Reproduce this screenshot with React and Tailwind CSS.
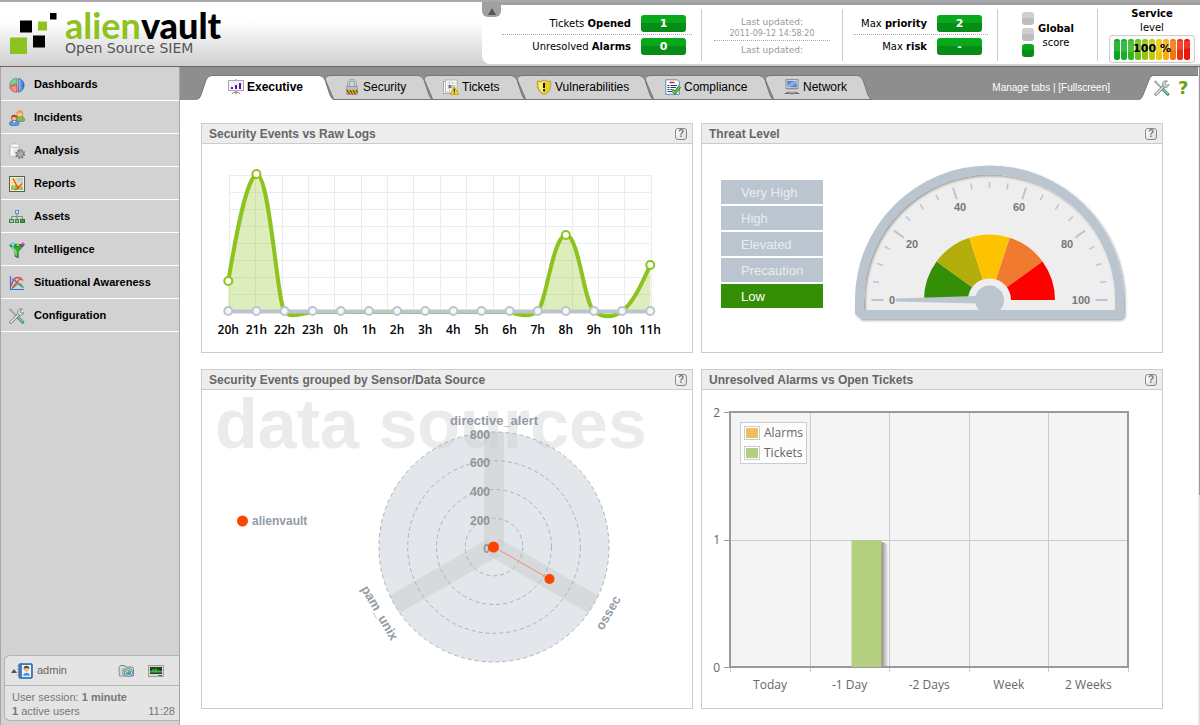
import React from 'react';

/* ---------- icons (16 x 16) ---------- */
function Icon({ children, size = 'size-4' }) {
  return (
    <svg viewBox="0 0 16 16" className={`${size} shrink-0`} aria-hidden="true">
      {children}
    </svg>
  );
}

const PieIcon = () => (
  <Icon>
    <defs>
      <linearGradient id="pieBlue" x1="0" y1="0" x2="1" y2="0">
        <stop offset="0" stopColor="#9cc8f3" />
        <stop offset="1" stopColor="#2a62c4" />
      </linearGradient>
    </defs>
    <path d="M9.200 1.400C17 2.500 17 13.500 9.600 15.200Z" fill="url(#pieBlue)" stroke="#2f5fae" strokeWidth=".7" />
    <path d="M7.500 1.200C3 1.600 .6 5 .7 8.600L7.500 6.500Z" fill="#7fcf94" stroke="#3c9c5c" strokeWidth=".7" />
    <path d="M.8 9.600 7.800 7.300 8.200 15.200C4 15.200 1.200 13 .8 9.600Z" fill="#f07a74" stroke="#c93a3a" strokeWidth=".7" />
    <path d="M4 9.500l1 5M6 9l.6 5.500" stroke="#fbc0bb" strokeWidth=".6" />
  </Icon>
);

const UsersIcon = () => (
  <Icon>
    <path d="M6 10c0-3 2-4 5-4s4.500 1.500 4.500 4.200c0 1-1 1.300-4.500 1.300S6 11 6 10Z" fill="#7dbb5a" stroke="#4b8c33" strokeWidth=".7" />
    <circle cx="10.800" cy="3.900" r="3.100" fill="#f3c592" stroke="#b9792c" strokeWidth=".6" />
    <path d="M7.500 3.800C7.600 1.300 9 .4 10.800.4s3.300 1 3.300 3.400C12.500 2.600 10 2.400 7.500 3.800Z" fill="#e3a33a" />
    <path d="M.5 14c0-2.600 2-3.500 4.800-3.500S10 11.400 10 14c0 1.200-1.200 1.600-4.700 1.600S.5 15.200.5 14Z" fill="#5b9ae6" stroke="#2d67b8" strokeWidth=".7" />
    <circle cx="5.200" cy="8" r="2.900" fill="#f0b98a" stroke="#8a4a22" strokeWidth=".6" />
    <path d="M2.200 7.900C2.300 5.600 3.500 4.700 5.200 4.700s3 1 3 3.200C6.500 6.700 4.500 6.500 2.200 7.900Z" fill="#9a5428" />
    <path d="M4 11l1.300 1.800L6.600 11Z" fill="#fff" />
  </Icon>
);

const AnalysisIcon = () => (
  <Icon>
    <path d="M1 3v8.500C1 13 3 13.800 5.800 13.800S10.500 13 10.500 11.500V3Z" fill="#e9e9e9" stroke="#a5a5a5" strokeWidth=".7" />
    <path d="M2.200 4.500v8M3.600 5v8.300" stroke="#fff" />
    <ellipse cx="5.800" cy="2.700" rx="4.700" ry="1.900" fill="#fafafa" stroke="#b0b0b0" strokeWidth=".7" />
    <circle cx="11.200" cy="11" r="4.200" fill="none" stroke="#777" strokeWidth="1.500" strokeDasharray="1.800 1.500" />
    <circle cx="11.200" cy="11" r="3.300" fill="#bdbdbd" stroke="#6f6f6f" strokeWidth=".9" />
    <circle cx="11.200" cy="11" r="1.300" fill="#eee" stroke="#6f6f6f" strokeWidth=".8" />
  </Icon>
);

const ReportsIcon = () => (
  <Icon>
    <rect x=".5" y=".5" width="15" height="15" fill="#f7f3d0" stroke="#56604f" />
    <rect x="2" y="2" width="12" height="12" fill="#f4dc7b" />
    <path d="M8 2h6v6L8 5Z" fill="#a7c8ea" />
    <path d="M2 10l5-1 7 2v3H2Z" fill="#8fbf68" />
    <path d="M2 5h12M2 8h12M5 2v12M11 2v12" stroke="#fff" strokeOpacity=".5" strokeWidth=".6" />
    <path d="M4 2.500 9 12l4-4.500M9 12l-3.500 2" stroke="#e0552e" strokeWidth="1.300" fill="none" />
  </Icon>
);

const AssetsIcon = () => (
  <Icon>
    <path d="M8 5v2.500M2.500 10V7.500h11V10M8 7v3" stroke="#8a8a8a" fill="none" />
    <rect x="6.500" y="1.500" width="3" height="3" fill="#cfe2fa" stroke="#5b8fd8" />
    <rect x=".5" y="10.500" width="4" height="3" fill="#98cf98" stroke="#3e8a3e" />
    <rect x="6.500" y="10.500" width="3" height="3" fill="#7cc07c" stroke="#3e8a3e" />
    <rect x="11.500" y="10.500" width="4" height="3" fill="#4c9c50" stroke="#2e7333" />
  </Icon>
);

const FunnelIcon = () => (
  <Icon>
    <path d="M.7 3.200 6 9.500v4.700l3.200 1.600V9.500L15 3.200Z" fill="#2fae2f" stroke="#166b1b" strokeWidth=".8" />
    <path d="M3 5l4 4.500v4" stroke="#a6ef8e" strokeWidth="1.200" fill="none" />
    <ellipse cx="7.800" cy="3.200" rx="6.800" ry="1.500" fill="#1c6e2c" />
    <circle cx="4" cy="2.600" r="1.900" fill="#7fdcf4" stroke="#3aa3c8" strokeWidth=".5" />
    <path d="M6.500 3.800 9 1.800l2 2Z" fill="#f6e03d" />
    <path d="M13.800.3v4M11.800 2.300h4" stroke="#d426d4" strokeWidth="1.300" />
  </Icon>
);

const SituationIcon = () => (
  <Icon>
    <path d="M1.500 1v13.500H15" fill="none" stroke="#3a6fc2" strokeWidth="1.200" />
    <path d="M2 11C5 1.500 9 .5 14 5.500" fill="none" stroke="#e2474b" strokeWidth="1.600" />
    <path d="M3 4c3 0 5 5 11 8" fill="none" stroke="#4d86e0" strokeWidth="1.600" />
    <path d="M3 13.500C6 12 8 7.500 10.500 8.500S13 12 14.500 13" fill="none" stroke="#5dae5d" strokeWidth="1.500" />
    <path d="M3.500 12.500 12 2.500" stroke="#e2474b" strokeWidth="1.200" />
  </Icon>
);

const ToolsIcon = () => (
  <Icon>
    <path d="M1.300 1.600 8.300 8.600" stroke="#7b8780" strokeWidth="1.900" strokeLinecap="round" />
    <path d="M1.300 1.600 8 8.300" stroke="#dfe5e1" strokeWidth=".8" />
    <path d="M8.500 8.800 13.800 14.200" stroke="#3b8f6a" strokeWidth="3" strokeLinecap="round" />
    <path d="M8.800 8.900 13.600 13.700" stroke="#9fd8bd" strokeWidth="1.100" strokeLinecap="round" />
    <path d="M1.900 14.200 10.500 5.600" stroke="#6f7672" strokeWidth="3" strokeLinecap="round" />
    <path d="M2 14.100 10.800 5.300" stroke="#e3e8e5" strokeWidth="1.500" strokeLinecap="round" />
    <path d="M13.500 1.300A3.300 3.300 0 1 0 15 4.600L12.800 5.300 11 3.700 11.600 1.800Z" fill="#d5dad7" stroke="#7a827d" strokeWidth=".8" />
  </Icon>
);

const BoardIcon = () => (
  <Icon>
    <path d="M8 0v1.500M8 12v3.500M4 14.600l2-1.300h4l2 1.300" stroke="#7d7d7d" fill="none" />
    <rect x=".5" y="1.500" width="15" height="10" fill="#f4f4f4" stroke="#a9a9a9" />
    <path d="M3 8h2v2H3ZM7 6h2v4H7ZM11 4h2v6h-2Z" fill="#5a12b8" />
  </Icon>
);

const LockIcon = () => (
  <Icon>
    <path d="M4.500 9V4.500a3.500 3.500 0 0 1 7 0V9" fill="none" stroke="#7d9096" strokeWidth="2.400" />
    <path d="M4.500 9V4.500a3.500 3.500 0 0 1 7 0V9" fill="none" stroke="#c6d6da" strokeWidth="1.200" />
    <rect x="2.500" y="7.500" width="11" height="8" rx=".6" fill="#b3c0c4" stroke="#7c888d" strokeWidth=".7" />
    <rect x="2.500" y="11" width="11" height="4" fill="#f2b428" />
    <path d="M3 11l2.500 4M6 11l2.500 4M9 11l2.500 4M12 11l1.500 2.500" stroke="#5b4411" strokeWidth="1.200" />
  </Icon>
);

const TicketIcon = () => (
  <Icon>
    <rect x=".5" y="2.500" width="11" height="12" fill="#fff" stroke="#9a9a9a" strokeWidth=".8" />
    <rect x="2.500" y="1" width="11.500" height="12" fill="#fff" stroke="#a8a8a8" strokeWidth=".8" />
    <path d="M4 4h9M4 6.500h9M4 9h6M6.500 2v10M9.500 2v7" stroke="#c4c4c4" strokeWidth=".8" />
    <path d="M5.500 6h3v3h-3Z" fill="#6d7a86" />
    <path d="M11.300 7.300 15.700 15.300H7Z" fill="#f7da2c" stroke="#b89410" strokeWidth=".8" strokeLinejoin="round" />
    <path d="M11.300 9.800v3M11.300 13.500v1" stroke="#222" strokeWidth="1.200" />
  </Icon>
);

const ShieldIcon = () => (
  <Icon>
    <path d="M8 .8C6 2.300 4 2.600 1.500 2c-1 6 .5 11 6.500 13.500C14 13 15.500 8 14.500 2 12 2.600 10 2.300 8 .8Z" fill="#e7cf2a" stroke="#ae9c3a" strokeWidth=".9" />
    <path d="M8 2.400C6.400 3.400 4.600 3.800 2.700 3.500c-.3 4.500.9 8.200 5.300 10.300Z" fill="#f8ee78" />
    <path d="M8 4v5M8 10.300v2" stroke="#111" strokeWidth="2" />
  </Icon>
);

const ComplianceIcon = () => (
  <Icon>
    <path d="M.8.8h11.500l2 2v12.500H.8Z" fill="#fff" stroke="#4f7fc0" strokeWidth=".9" />
    <path d="M4.500 3.500h5" stroke="#d22" strokeWidth="1.500" />
    <path d="M2.500 6.500h2M5.500 6.500H12M2.500 8.500h2M5.500 8.500H11M2.500 10.500h2M5.500 10.500h2M2.500 12.500h5" stroke="#1f3a78" strokeWidth="1" />
    <path d="M7.300 11.200 10 13.800 14.800 7.500" fill="none" stroke="#2b7d24" strokeWidth="3.200" />
    <path d="M7.300 11.200 10 13.800 14.800 7.500" fill="none" stroke="#5fc34c" strokeWidth="1.900" />
  </Icon>
);

const NetworkIcon = () => (
  <Icon>
    <defs>
      <linearGradient id="screenBlue" x1="0" y1="0" x2="1" y2="1">
        <stop offset="0" stopColor="#2d64b4" />
        <stop offset=".5" stopColor="#8db5e6" />
        <stop offset="1" stopColor="#2d64b4" />
      </linearGradient>
    </defs>
    <rect x="2" y=".7" width="12" height="9" fill="#d8d8d8" stroke="#6f7884" strokeWidth=".8" />
    <rect x="3.300" y="2" width="9.400" height="6.300" fill="url(#screenBlue)" />
    <path d="M5 10.500h6v2H5Z" fill="#e9e9e9" stroke="#8a8a8a" strokeWidth=".6" />
    <path d="M.5 14.500h15M2 13.500h3M11 13.500h3M7 13v2.500M9 13v2.500" stroke="#777" />
  </Icon>
);

const AddressIcon = () => (
  <Icon>
    <rect x="2" y=".7" width="13.300" height="14.600" rx="1" fill="#3b82cf" stroke="#1f5ba6" strokeWidth=".8" />
    <rect x="5" y="2" width="9" height="12" fill="#eef5fc" />
    <path d="M.5 3h3M.5 6h3M.5 9h3M.5 12h3" stroke="#5c6b7d" strokeWidth="1.200" />
    <circle cx="9.500" cy="6" r="2.700" fill="#f1bd8c" />
    <path d="M6.600 6C6.300 1.800 12.700 1.800 12.400 6 11 4.600 8.500 4.600 6.600 6Z" fill="#7c3f14" />
    <path d="M6 12.700c.3-4 6.700-4 7 0Z" fill="#4e93df" />
  </Icon>
);

const CameraIcon = () => (
  <Icon>
    <path d="M1 4.500 2.500 2.500h4L8 4h6.500l1 1.500v7.500H1.500Z" fill="#cfd6da" stroke="#75797c" strokeWidth=".9" />
    <path d="M1.500 5.500H8v7H1.500Z" fill="#a9b1b6" />
    <path d="M3 4v8.500" stroke="#eef1f2" strokeWidth="1.200" />
    <circle cx="10.500" cy="9.500" r="4" fill="#dde3e6" stroke="#5f666b" strokeWidth=".8" />
    <circle cx="10.500" cy="9.500" r="2.500" fill="#2f9cb4" />
    <circle cx="9.700" cy="8.700" r=".9" fill="#b9eef6" />
  </Icon>
);

const MonitorIcon = () => (
  <Icon>
    <rect x=".5" y="2.500" width="15" height="11" fill="#d5d5d5" stroke="#8f8f8f" strokeWidth=".8" />
    <rect x="2" y="4" width="12" height="7" fill="#274128" />
    <path d="M2 9.500V8h2l1-2.500 1.500 2L8 5l1.500 3 1.500-1 1 1h2v1.500Z" fill="#3fb83a" />
    <path d="M10.500 12.500h3.500" stroke="#555" />
  </Icon>
);

/* ---------- header ---------- */
function Logo() {
  return (
    <a href="#home" aria-label="alienvault Open Source SIEM" className="flex items-start gap-2 pt-[11px] pl-[10px]">
      <svg viewBox="10 13 47 41" className="w-[47px]" aria-hidden="true">
        <path d="M50 13h6.500v6.500H50ZM20 20.500h12V32.500H20ZM33 35.500h12V47.500H33Z" fill="#000" />
        <path d="M38 21.500h9V30.500h-9ZM10 37.500h17V54H10Z" fill="#8dc21f" />
      </svg>
      <span className="flex flex-col gap-[3px]">
        <span className="font-['Lato',sans-serif] text-[36px] leading-6 text-black">
          <span className="font-bold text-[#8dc21f]">alien</span>
          <span className="font-black">vault</span>
        </span>
        <span className="font-['DejaVu_Sans',sans-serif] text-[14px] leading-4 text-[#555]">Open Source SIEM</span>
      </span>
    </a>
  );
}

function Pill({ children }) {
  return (
    <span className="flex h-[17px] w-[45px] items-center justify-center rounded-[3px] bg-[linear-gradient(#07a91b_50%,#078d17_50%)] text-[11px] font-bold text-white">
      {children}
    </span>
  );
}

function StatPair({ rows, className }) {
  return (
    <dl className={`flex flex-col pt-[10px] ${className}`}>
      {rows.map(([word, strong, value], i) => (
        <div
          key={strong}
          className={`flex items-center justify-end gap-[10px] ${
            i === 0 ? 'border-b border-dotted border-[#aaa] pb-[2px]' : 'pt-[3px]'
          } pr-[6px]`}
        >
          <dt>
            {word} <b>{strong}</b>
          </dt>
          <dd>
            <Pill>{value}</Pill>
          </dd>
        </div>
      ))}
    </dl>
  );
}

const Divider = () => <span className="mt-1 h-[52px] w-px shrink-0 bg-[#ccc]" />;

const SERVICE_COLOURS = ['#08a520', '#12b02a', '#2fb81c', '#6cbf12', '#93c40c', '#bfc90a', '#e8c808', '#f6ac0a', '#f3720c', '#f02a10', '#ec1408'];

function StatusBar() {
  return (
    <section
      aria-label="Status"
      className="flex h-[62px] w-[718px] rounded-bl-lg border-t-[3px] border-[#a0a0a0] bg-white font-['DejaVu_Sans',sans-serif] text-[10px] leading-[13px] text-black"
    >
      <button type="button" aria-label="Collapse" className="flex h-3 w-[19px] items-center justify-center rounded-b-md bg-[#a0a0a0]">
        <svg viewBox="0 0 8 7" className="w-2" aria-hidden="true">
          <path d="M4 0 8 7H0Z" fill="#555" />
        </svg>
      </button>
      <StatPair
        className="mr-[9px] ml-px w-[190px]"
        rows={[
          ['Tickets', 'Opened', '1'],
          ['Unresolved', 'Alarms', '0'],
        ]}
      />
      <Divider />
      <div className="mx-3 flex w-[116px] flex-col pt-[11px] text-center text-[9px] leading-3 text-[#999]">
        <span>Last updated:</span>
        <span className="border-b border-dotted border-[#aaa] pb-px text-[8px] leading-[11px]">2011-09-12 14:58:20</span>
        <span className="pt-[3px]">Last updated:</span>
      </div>
      <Divider />
      <StatPair
        className="mr-[9px] ml-[10px] w-[135px]"
        rows={[
          ['Max', 'priority', '2'],
          ['Max', 'risk', '-'],
        ]}
      />
      <Divider />
      <div className="flex w-[99px] items-start gap-1 pt-[7px] pl-6">
        <div className="flex flex-col gap-[3px]">
          <span className="h-[13px] w-3 rounded-[3px] bg-[linear-gradient(#cfcfcf_50%,#bdbdbd_50%)]" />
          <span className="h-[13px] w-3 rounded-[3px] bg-[linear-gradient(#cfcfcf_50%,#bdbdbd_50%)]" />
          <span className="h-[13px] w-3 rounded-[3px] bg-[linear-gradient(#07a91b_50%,#078d17_50%)]" />
        </div>
        <div className="flex flex-col pt-[10px] text-center leading-[14px]">
          <b>Global</b>
          <span>score</span>
        </div>
      </div>
      <Divider />
      <div className="flex flex-1 flex-col items-center pt-[2px] pl-[6px] leading-[14px]">
        <b>Service</b>
        <span>level</span>
        <div className="grid h-[28px] w-[86px] place-items-center rounded-[3px] border border-[#ccc] bg-[#fafafa]">
          <svg viewBox="0 0 76 21" className="col-start-1 row-start-1 w-[76px]" aria-hidden="true">
            {SERVICE_COLOURS.map((c, i) => (
              <rect key={c} x={i * 7} y="0" width="6" height="21" rx="2.500" fill={c} />
            ))}
            <path d="M0 2H76V9Q40 16 0 12Z" fill="#fff" opacity=".15" />
          </svg>
          <b className="z-10 col-start-1 row-start-1 text-[11px]">100 %</b>
        </div>
      </div>
    </section>
  );
}

/* ---------- sidebar ---------- */
const MENU = [
  ['Dashboards', PieIcon],
  ['Incidents', UsersIcon],
  ['Analysis', AnalysisIcon],
  ['Reports', ReportsIcon],
  ['Assets', AssetsIcon],
  ['Intelligence', FunnelIcon],
  ['Situational Awareness', SituationIcon],
  ['Configuration', ToolsIcon],
];

function Sidebar() {
  return (
    <aside className="flex w-[180px] shrink-0 flex-col border-x border-[#a6a6a6] bg-[#d2d2d2]">
      <nav aria-label="Main" className="pt-px">
        <ul>
          {MENU.map(([label, Glyph]) => (
            <li key={label}>
              <a href="#section" className="flex h-[33px] items-center gap-[9px] border-b border-white pt-px pl-2 text-[11px] font-bold text-black">
                <Glyph />
                {label}
              </a>
            </li>
          ))}
        </ul>
      </nav>
      <div className="mt-auto mb-1 ml-[3px] rounded-l-md border border-r-0 border-[#b5b5b5] bg-[#e4e4e4] text-[11px] text-[#777]">
        <div className="flex h-[30px] items-center border-b border-[#b5b5b5] pl-[6px]">
          <svg viewBox="0 0 6 4" className="w-[6px]" aria-hidden="true">
            <path d="M3 0 6 4H0Z" fill="#555" />
          </svg>
          <button type="button" className="flex flex-1 items-center gap-1 text-[#666]">
            <AddressIcon />
            admin
          </button>
          <button type="button" aria-label="Snapshot">
            <CameraIcon />
          </button>
          <button type="button" aria-label="System monitor" className="mr-[15px] ml-[14px]">
            <MonitorIcon />
          </button>
        </div>
        <div className="px-[7px] pt-1 pr-1 pb-[2px] leading-[14px]">
          <p>
            User session: <b>1 minute</b>
          </p>
          <p className="flex justify-between">
            <span>
              <b>1</b> active users
            </span>
            <span>11:28</span>
          </p>
        </div>
      </div>
    </aside>
  );
}

/* ---------- tabs ---------- */
const TABS = [
  { label: 'Executive', Glyph: BoardIcon, w: 127, cls: 'z-60 w-[127px] pl-[30px] font-bold' },
  { label: 'Security', Glyph: LockIcon, w: 99, cls: 'z-50 w-[99px] pl-[19px]' },
  { label: 'Tickets', Glyph: TicketIcon, w: 93, cls: 'z-40 w-[93px] pl-[19px]' },
  { label: 'Vulnerabilities', Glyph: ShieldIcon, w: 128, cls: 'z-30 w-[128px] pl-[19px]' },
  { label: 'Compliance', Glyph: ComplianceIcon, w: 120, cls: 'z-20 w-[120px] pl-[20px]' },
  { label: 'Network', Glyph: NetworkIcon, w: 98, cls: 'z-10 w-[98px] pl-[19px]' },
];

function tabPath(w, first) {
  const left = first ? 'M-2 25Q2 24 3 20L8 5Q10 .5 14 .5' : 'M9 25L0 4Q1 .5 5 .5';
  return `${left}H${w - 6}Q${w - 2} .5 ${w} 5L${w + 5} 20Q${w + 7} 24.500 ${w + 9} 25`;
}

function Tab({ tab, active }) {
  const { label, Glyph, w, cls } = tab;
  return (
    <button type="button" role="tab" aria-selected={active} className={`relative flex h-[25px] shrink-0 items-center pb-[2px] text-xs text-black ${cls}`}>
      <svg viewBox={`0 0 ${w} 25`} className="absolute inset-0 size-full overflow-visible" aria-hidden="true">
        <path d={tabPath(w, active)} fill={active ? '#fff' : '#d2d2d2'} stroke="#777" />
        {!active && <path d={`M9 24.500H${w + 8}`} stroke="#777" />}
        {active && <path d={`M-2 25.500H${w + 9}`} stroke="#fff" strokeWidth="1.500" />}
      </svg>
      <span className="relative flex items-center gap-[3px]">
        <Glyph />
        {label}
      </span>
    </button>
  );
}

function TabBar() {
  return (
    <div className="flex h-[33px] items-end bg-[#8e8e8e] pl-[18px]">
      <div role="tablist" className="flex flex-1">
        {TABS.map((tab, i) => (
          <Tab key={tab.label} tab={tab} active={i === 0} />
        ))}
      </div>
      <p className="pb-1 text-[10px] leading-4 text-white">
        <a href="#tabs">Manage tabs</a> | <a href="#full">[Fullscreen]</a>
      </p>
      <div className="relative ml-7 flex h-[25px] w-[60px] items-center gap-2 pl-4">
        <svg viewBox="0 0 60 25" className="absolute inset-0 size-full" aria-hidden="true">
          <path d="M0 25Q4 24 5 20L11 5Q12 .5 16 .5H60V25Z" fill="#fff" />
          <path d="M0 25Q4 24 5 20L11 5Q12 .5 16 .5H60" fill="none" stroke="#777" />
        </svg>
        <button type="button" aria-label="Tools" className="relative">
          <ToolsIcon />
        </button>
        <button type="button" aria-label="Help" className="relative font-['DejaVu_Sans',sans-serif] text-lg leading-5 font-bold text-[#6ba00f]">
          ?
        </button>
      </div>
    </div>
  );
}

/* ---------- panels ---------- */
function Panel({ title, children }) {
  return (
    <section className="flex flex-col border border-[#ccc] bg-white">
      <header className="flex h-5 items-center justify-between border-b border-[#ccc] bg-[#ededed] pr-[5px] pl-[7px]">
        <h2 className="text-xs font-bold text-[#666]">{title}</h2>
        <button
          type="button"
          aria-label="Help"
          className="flex size-3 items-center justify-center rounded-[3px] border border-[#888] bg-[linear-gradient(135deg,#fff,#ddd)] text-[10px] leading-[10px] font-bold text-[#777]"
        >
          ?
        </button>
      </header>
      {children}
    </section>
  );
}

const HOURS = ['20h', '21h', '22h', '23h', '0h', '1h', '2h', '3h', '4h', '5h', '6h', '7h', '8h', '9h', '10h', '11h'];
const hourX = (i) => 228.300 + i * 28.130;
const CURVE =
  'M228.300 281C236 235 246 180 256.400 174C270 174 277 304 284.600 311C290 318 297 315 312.700 312H509C520 315 530 318 537.700 311C546 304 553 235 566 235C579 235 584 304 594 311C602 318 614 318 622 311C632 304 640 288 650.300 265';

function EventsChart() {
  return (
    <svg viewBox="202 144 490 208" className="w-full" role="img" aria-label="Security events per hour">
      <g stroke="#ececec">
        {Array.from({ length: 9 }, (_, i) => (
          <path key={i} d={`M229 ${175.500 + i * 17}H651`} />
        ))}
        {Array.from({ length: 17 }, (_, i) => (
          <path key={i} d={`M${229.500 + Math.round(i * 26.350)} 175V311`} />
        ))}
      </g>
      <path d={`${CURVE}V311H228.300Z`} fill="#8dc21f" fillOpacity=".3" />
      <path d={CURVE} fill="none" stroke="#8dc21f" strokeWidth="4" strokeLinejoin="round" />
      <path d="M228 311.500H650" stroke="#bac5cf" strokeWidth="4" />
      {HOURS.map((h, i) => (
        <g key={h}>
          <circle cx={hourX(i)} cy="311" r="4" fill="#f6f6f6" stroke="#bac5cf" strokeWidth="2" />
          <text x={hourX(i)} y="334" textAnchor="middle" className="fill-black font-['Open_Sans',sans-serif] text-[12px] font-semibold">
            {h}
          </text>
        </g>
      ))}
      {[[0, 281], [1, 174], [12, 235], [15, 265]].map(([i, y]) => (
        <circle key={i} cx={hourX(i)} cy={y} r="4" fill="#fff" stroke="#8dc21f" strokeWidth="2" />
      ))}
    </svg>
  );
}

const LEVELS = ['Very High', 'High', 'Elevated', 'Precaution', 'Low'];
const BANDS = ['#348f06', '#b3ad0b', '#fdc300', '#f07a30', '#ff0000'];
const GX = 989.500;
const GY = 300;
function polar(r, deg) {
  const a = (deg * Math.PI) / 180;
  return `${(GX - r * Math.cos(a)).toFixed(2)} ${(GY - r * Math.sin(a)).toFixed(2)}`;
}

function Gauge() {
  return (
    <svg viewBox="844 156 294 176" className="w-[294px]" role="img" aria-label="Threat level 0 of 100">
      <defs>
        <filter id="drop" x="-10%" y="-10%" width="120%" height="120%">
          <feDropShadow dx="1.500" dy="1.500" stdDeviation="1.200" floodColor="#000" floodOpacity=".35" />
        </filter>
      </defs>
      <path d="M864 300A125.500 125.500 0 0 1 1115 300V310H864Z" fill="#eee" />
      <path
        filter="url(#drop)"
        fillRule="evenodd"
        d="M855 300A134.500 134.500 0 0 1 1124 300V313Q1124 319 1118 319H861L855 314ZM864 300V310H1115V300A125.500 125.500 0 0 0 864 300Z"
        fill="#bac5cf"
      />
      {BANDS.map((c, i) => (
        <path key={c} d={`M${polar(65.500, i * 36)}A65.500 65.500 0 0 1 ${polar(65.500, i * 36 + 36)}L${polar(21.500, i * 36 + 36)}A21.500 21.500 0 0 0 ${polar(21.500, i * 36)}Z`} fill={c} />
      ))}
      {Array.from({ length: 21 }, (_, i) => (
        <path
          key={i}
          d={`M${polar(118, i * 9)}L${polar(i % 4 === 0 ? 106 : 112, i * 9)}`}
          stroke="#bac5cf"
          strokeWidth={i % 4 === 0 ? 2 : 1.500}
        />
      ))}
      <path d="M896 298.500 976 296V303.500L896 301.500Z" fill="#bac5cf" />
      <circle cx={GX} cy={GY} r="14.500" fill="#bac5cf" />
      {[[0, 892, 304], [20, 912, 248], [40, 960, 211], [60, 1019, 211], [80, 1067, 248], [100, 1081, 304]].map(([n, x, y]) => (
        <text key={n} x={x} y={y} textAnchor="middle" className="fill-[#777] text-[11px] font-bold">
          {n}
        </text>
      ))}
    </svg>
  );
}

function ThreatLevel() {
  return (
    <div className="flex items-start pl-[19px]">
      <ul className="flex w-[102px] flex-col gap-[2px] pt-9 text-[13px] leading-[23px]">
        {LEVELS.map((l) => (
          <li key={l} className={`pt-px pl-5 ${l === 'Low' ? 'bg-[#348f06] text-white' : 'bg-[#bac5cf] text-[#e9edf1]'}`}>
            {l}
          </li>
        ))}
      </ul>
      <div className="ml-[21px] pt-3">
        <Gauge />
      </div>
    </div>
  );
}

function SourcesChart() {
  return (
    <svg viewBox="202 390 490 318" className="w-full overflow-visible" role="img" aria-label="Events by data source">
      <text x="215" y="448" className="fill-[#ebebeb] text-[70px] font-bold">
        data sources
      </text>
      <circle cx="494" cy="547" r="115" fill="#c8d0d9" fillOpacity=".5" />
      <g fill="#c3c9c6" fillOpacity=".4">
        <path d="M484 432.500Q494 431.500 504 432.500V547H484Z" />
        <path d="M484 432.500Q494 431.500 504 432.500V547H484Z" transform="rotate(120 494 547)" />
        <path d="M484 432.500Q494 431.500 504 432.500V547H484Z" transform="rotate(240 494 547)" />
      </g>
      <g fill="none" stroke="#aeb2b6" strokeDasharray="4 3">
        <circle cx="494" cy="547" r="28.800" />
        <circle cx="494" cy="547" r="57.500" />
        <circle cx="494" cy="547" r="86.300" />
        <circle cx="494" cy="547" r="115" />
      </g>
      <g className="fill-[#8f9599] text-[12px] font-bold" textAnchor="end">
        <text x="490" y="439">800</text>
        <text x="490" y="467">600</text>
        <text x="490" y="496">400</text>
        <text x="490" y="525">200</text>
        <text x="490" y="553">0</text>
      </g>
      <path d="M494 547 549.500 579" stroke="#ff7a4d" strokeOpacity=".8" />
      <circle cx="493.500" cy="547" r="5.500" fill="#ff4300" />
      <circle cx="549.500" cy="579" r="5" fill="#ff4300" />
      <circle cx="242.500" cy="521" r="5.500" fill="#ff4300" />
      <g className="fill-[#939ba6] text-[12px] font-bold">
        <text x="252" y="525">alienvault</text>
        <g className="text-[13px]" textAnchor="middle">
          <text x="494" y="425">directive_alert</text>
          <text x="376" y="615" transform="rotate(60 376 615)">pam_unix</text>
          <text x="612" y="615" transform="rotate(-60 612 615)">ossec</text>
        </g>
      </g>
    </svg>
  );
}

const PERIODS = ['Today', '-1 Day', '-2 Days', 'Week', '2 Weeks'];

function AlarmsChart() {
  return (
    <svg viewBox="702 390 460 318" className="w-full font-['Open_Sans',sans-serif] text-[12px]" role="img" aria-label="Unresolved alarms and open tickets">
      <defs>
        <linearGradient id="barShade">
          <stop offset="0" stopColor="#888" />
          <stop offset="1" stopColor="#888" stopOpacity=".05" />
        </linearGradient>
      </defs>
      <rect x="730" y="412" width="398" height="255" fill="#f4f4f4" />
      <path d="M810.500 412V672M889.500 412V672M969.500 412V672M1048.500 412V672M730.500 667V672M1128.500 667V672M730 540.500H1128" stroke="#ccc" />
      <path d="M881 542Q888 542 888 548V667H881Z" fill="url(#barShade)" />
      <rect x="730" y="412" width="398" height="255" fill="none" stroke="#999" strokeWidth="2" />
      <path d="M724 412.500H730M724 540.500H730M724 667.500H730" stroke="#999" />
      <rect x="851.500" y="540" width="30" height="127" fill="#b4cf7f" />
      <rect x="740.500" y="422.500" width="66" height="41" fill="#fff" fillOpacity=".7" stroke="#ccc" />
      <g fill="#fff" stroke="#ccc">
        <rect x="744.500" y="426.500" width="15" height="13" />
        <rect x="744.500" y="446.500" width="15" height="13" />
      </g>
      <rect x="746" y="428" width="12" height="10" fill="#eebd67" />
      <rect x="746" y="448" width="12" height="10" fill="#b4cf7f" />
      <g className="fill-[#666]">
        <text x="764" y="437">Alarms</text>
        <text x="764" y="457">Tickets</text>
        <text x="720" y="417" textAnchor="end">2</text>
        <text x="720" y="544" textAnchor="end">1</text>
        <text x="720" y="672" textAnchor="end">0</text>
        {PERIODS.map((p, i) => (
          <text key={p} x={770 + i * 79.600} y="689" textAnchor="middle">
            {p}
          </text>
        ))}
      </g>
    </svg>
  );
}

export default function App() {
  return (
    <div className="flex min-h-screen flex-col bg-white font-['Liberation_Sans',Arial,sans-serif]">
      <header className="flex justify-between border-t-2 border-b border-t-[#aaa] border-b-[#666] bg-[linear-gradient(#fff_30%,#cfcfcf)] pb-[2px]">
        <Logo />
        <StatusBar />
      </header>
      <div className="flex flex-1">
        <Sidebar />
        <main className="flex min-w-0 flex-1 flex-col">
          <TabBar />
          <div className="grid grid-cols-[492fr_462fr] gap-x-2 gap-y-4 pt-[23px] pr-[35px] pb-4 pl-[21px]">
            <Panel title="Security Events vs Raw Logs">
              <EventsChart />
            </Panel>
            <Panel title="Threat Level">
              <ThreatLevel />
            </Panel>
            <Panel title="Security Events grouped by Sensor/Data Source">
              <SourcesChart />
            </Panel>
            <Panel title="Unresolved Alarms vs Open Tickets">
              <AlarmsChart />
            </Panel>
          </div>
        </main>
        <div className="w-[2px] border-l border-[#eee] bg-[linear-gradient(#999_428px,#ddd_428px)]" />
      </div>
    </div>
  );
}
